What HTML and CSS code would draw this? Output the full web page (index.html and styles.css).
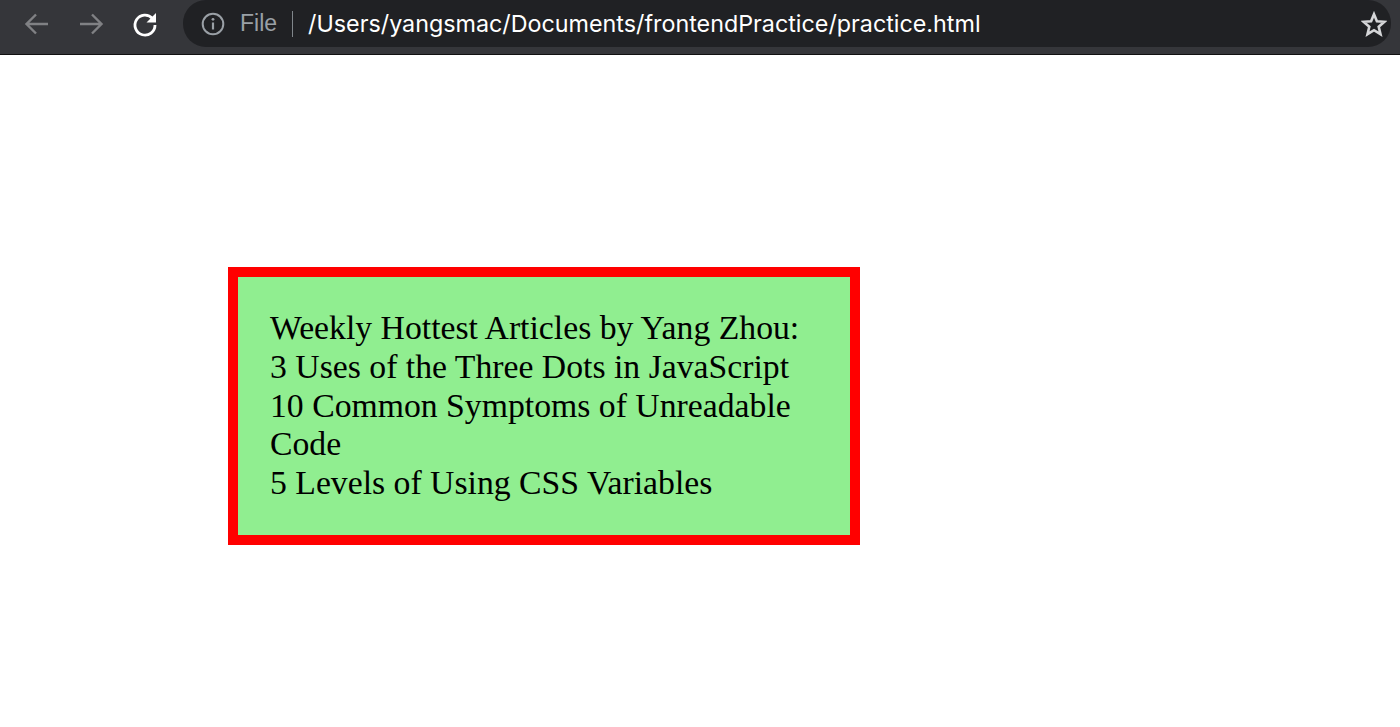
FILE: index.html
```html
<!DOCTYPE html>
<html lang="en">
<head>
  <meta charset="UTF-8" />
  <meta name="viewport" content="width=device-width, initial-scale=1" />
  <title>practice.html</title>
  <link rel="stylesheet" href="styles.css">
</head>
<body>

  <div class="toolbar">
    <div class="nav">
      <svg class="nav-icon" width="28" height="28" viewBox="0 0 28 28"><path d="M25 14H4M13 4.500L3.500 14l9.500 9.500" fill="none" stroke="#808184" stroke-width="2.400"/></svg>
      <svg class="nav-icon" width="28" height="28" viewBox="0 0 28 28"><path d="M3 14h21M15 4.500l9.500 9.500-9.500 9.500" fill="none" stroke="#808184" stroke-width="2.400"/></svg>
      <svg class="nav-icon" width="28" height="28" viewBox="0 0 28 28"><path d="M21.500 8.500A10 10 0 1 0 24 15" fill="none" stroke="#fff" stroke-width="2.800"/><path d="M25 3v9.500h-9.500z" fill="#fff"/></svg>
    </div>
    <div class="omnibox">
      <svg class="info-icon" width="24" height="24" viewBox="0 0 24 24"><circle cx="12" cy="12" r="10.300" fill="none" stroke="#9aa0a6" stroke-width="2"/><path d="M12 10.500v7" stroke="#9aa0a6" stroke-width="2.200"/><circle cx="12" cy="7.300" r="1.400" fill="#9aa0a6"/></svg>
      <span class="scheme">File</span>
      <span class="divider"></span>
      <span class="url">/Users/yangsmac/Documents/frontendPractice/practice.html</span>
      <svg class="star-icon" width="26" height="26" viewBox="0 0 26 26"><path d="M13 3.200l2.900 7 7.600.6-5.800 5 1.800 7.400L13 19.200l-6.500 4 1.800-7.400-5.800-5 7.600-.6z" fill="none" stroke="#d5d6d8" stroke-width="2.600"/></svg>
    </div>
  </div>

  <div class="articles">
    Weekly Hottest Articles by Yang Zhou:<br>
    3 Uses of the Three Dots in JavaScript<br>
    10 Common Symptoms of Unreadable Code<br>
    5 Levels of Using CSS Variables
  </div>

</body>
</html>
```

FILE: styles.css
```css
body {
  margin: 0;
  background-color: #fff;
  font-family: "Liberation Serif", serif;
}
.toolbar {
  display: flex;
  align-items: flex-start;
  height: 54px;
  padding-left: 23px;
  padding-right: 9px;
  background-color: #35363a;
  border-bottom: 1px solid #111;
}
.nav {
  display: flex;
  align-items: center;
  gap: 26px;
  height: 47px;
  width: 160px;
}
.omnibox {
  display: flex;
  flex: 1;
  align-items: center;
  height: 47px;
  padding-left: 18px;
  padding-right: 4px;
  background-color: #202124;
  border-radius: 23px;
  font-family: "Liberation Sans", sans-serif;
  font-size: 23px;
}
.info-icon {
  margin-right: 15px;
}
.scheme {
  color: #9aa0a6;
}
.divider {
  width: 1px;
  height: 26px;
  margin: 0 15px;
  background-color: #80868b;
}
.url {
  flex: 1;
  font-family: Inter, sans-serif;
  font-size: 23.3px;
  color: #fff;
}
.articles {
  width: 548px;
  margin-top: 212px;
  margin-left: 228px;
  padding: 32px;
  background-color: lightgreen;
  border: 10px solid red;
  font-size: 33.72px;
  line-height: 38.8px;
  color: #000;
}
```
